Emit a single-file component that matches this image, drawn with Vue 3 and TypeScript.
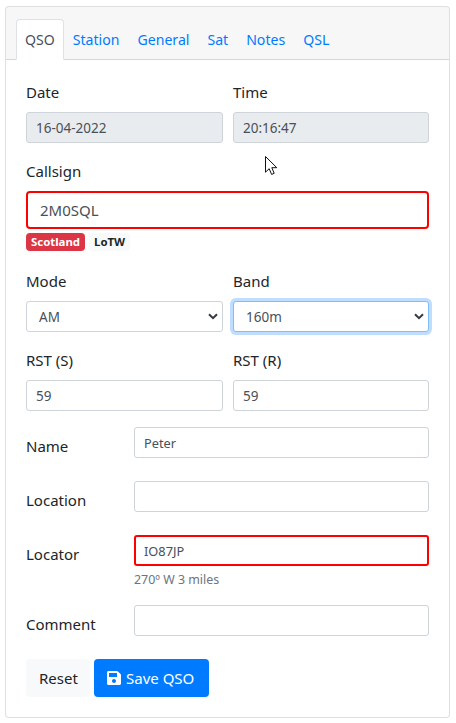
<script setup lang="ts">
const tabs: string[] = ['Station', 'General', 'Sat', 'Notes', 'QSL']
</script>

<template>
  <div class="card">
    <div class="card-header">
      <ul class="tabs">
        <li class="tab active">QSO</li>
        <li v-for="t in tabs" :key="t" class="tab">{{ t }}</li>
      </ul>
    </div>
    <div class="card-body">
      <div class="two">
        <div class="group">
          <label>Date</label>
          <input class="ctl" disabled value="16-04-2022" />
        </div>
        <div class="group">
          <label>Time</label>
          <input class="ctl" disabled value="20:16:47" />
        </div>
      </div>

      <div class="callsign">
        <label>Callsign</label>
        <input class="ctl large" value="2M0SQL" />
        <div class="badges">
          <span class="badge danger">Scotland</span>
          <span class="badge light">LoTW</span>
        </div>
      </div>

      <div class="two">
        <div class="group">
          <label>Mode</label>
          <div class="select-wrap">
            <select class="ctl sel"><option>AM</option></select>
            <svg class="chev" viewBox="0 0 10 7" width="10" height="7"><path d="M1 1.2L5 5.2L9 1.2" fill="none" stroke="#343a40" stroke-width="2" /></svg>
          </div>
        </div>
        <div class="group">
          <label>Band</label>
          <div class="select-wrap">
            <select class="ctl sel focus"><option>160m</option></select>
            <svg class="chev" viewBox="0 0 10 7" width="10" height="7"><path d="M1 1.2L5 5.2L9 1.2" fill="none" stroke="#343a40" stroke-width="2" /></svg>
          </div>
        </div>
      </div>

      <div class="two">
        <div class="group">
          <label>RST (S)</label>
          <input class="ctl" value="59" />
        </div>
        <div class="group">
          <label>RST (R)</label>
          <input class="ctl" value="59" />
        </div>
      </div>

      <div class="row">
        <label class="side">Name</label>
        <input class="ctl narrow" value="Peter" />
      </div>
      <div class="row">
        <label class="side">Location</label>
        <input class="ctl" value="" />
      </div>
      <div class="row">
        <label class="side">Locator</label>
        <div>
          <input class="ctl narrow red" value="IO87JP" />
          <small class="hint">270º W 3 miles</small>
        </div>
      </div>
      <div class="row">
        <label class="side">Comment</label>
        <input class="ctl" value="" />
      </div>

      <div class="buttons">
        <button class="btn light-btn" type="button">Reset</button>
        <button class="btn primary" type="button">
          <svg class="save" viewBox="0 0 448 512" width="14" height="16"><path fill="currentColor" d="M433.941 129.941l-83.882-83.882A48 48 0 0 0 316.118 32H48C21.49 32 0 53.49 0 80v352c0 26.51 21.49 48 48 48h352c26.51 0 48-21.49 48-48V163.882a48 48 0 0 0-14.059-33.941zM224 416c-35.346 0-64-28.654-64-64 0-35.346 28.654-64 64-64s64 28.654 64 64c0 35.346-28.654 64-64 64zm96-304.52V212c0 6.627-5.373 12-12 12H76c-6.627 0-12-5.373-12-12V108c0-6.627 5.373-12 12-12h228.52c3.183 0 6.235 1.264 8.485 3.515l3.48 3.48A11.996 11.996 0 0 1 320 111.48z" /></svg>
          Save QSO
        </button>
      </div>
    </div>

    <svg class="cursor" viewBox="0 0 12 19" width="12" height="19"><path d="M0.5 0.5V16.2L4.2 12.7L6.6 18.4L9.2 17.3L6.8 11.7H11.8Z" fill="#fff" stroke="#111" stroke-width="1" stroke-linejoin="round" /></svg>
  </div>
</template>

<style>
html, body { margin: 0; background: #fff; }
</style>

<style scoped>
.card, .card * { box-sizing: border-box; }
.card {
  position: relative;
  width: 445px;
  margin: 6px 0 0 5px;
  border: 1px solid rgba(0, 0, 0, .125);
  border-radius: 4px;
  background: #fff;
  font-family: "Noto Sans", "Open Sans", sans-serif;
  font-size: 15px;
  line-height: 24px;
  color: #212529;
}
.card-header {
  height: 53px;
  padding: 12px 10px 0;
  background: rgba(0, 0, 0, .03);
  border-bottom: 1px solid rgba(0, 0, 0, .125);
  border-radius: 3px 3px 0 0;
}
.tabs { display: flex; list-style: none; margin: 0; padding: 0; }
.tab {
  height: 41px;
  padding: 8px;
  border: 1px solid transparent;
  border-radius: 4px 4px 0 0;
  color: #007bff;
  font-size: 14.1px;
}
.tab.active {
  color: #495057;
  background: #fff;
  border-color: #dee2e6 #dee2e6 #fff;
}
.card-body { padding: 20px; }
.two { display: grid; grid-template-columns: 197px 196px; gap: 10px; margin-bottom: 16px; }
label { display: block; margin-bottom: 8px; }
.ctl {
  display: block;
  width: 100%;
  height: 31px;
  padding: 4px 8px 4px 9px;
  border: 1px solid #ced4da;
  border-radius: 3px;
  background: #fff;
  color: #495057;
  font: 13.5px/20px "Noto Sans", "Open Sans", sans-serif;
  outline: none;
}
.ctl:disabled { background: #e9ecef; opacity: 1; }
.narrow { font-size: 12.8px; }
.large {
  height: 38px;
  padding: 6px 12px;
  border: 2px solid #f00;
  border-radius: 4px;
  font-size: 15px;
}
.red { border: 2px solid #f00; padding-left: 8px; }
.callsign { margin-bottom: 18px; }
.badges { display: flex; gap: 4px; margin-top: 4px; height: 18px; }
.badge {
  height: 18px;
  padding: 0 5px;
  border-radius: 4px;
  font-size: 11.4px;
  font-weight: 700;
  line-height: 18px;
}
.danger { background: #dc3545; color: #fff; }
.light { background: #f8f9fa; color: #212529; }
.select-wrap { position: relative; }
.sel { appearance: none; padding-left: 12px; }
.focus { border-color: #80bdff; box-shadow: 0 0 0 3px rgba(0, 123, 255, .25); }
.chev { position: absolute; right: 5px; top: 12px; pointer-events: none; }
.row { display: grid; grid-template-columns: 98px 295px; gap: 10px; margin-bottom: 16px; min-height: 38px; }
.side { margin: 0; padding: 7px 0; }
.hint { display: block; margin-top: 5px; font-size: 12.4px; line-height: 18px; color: #6c757d; }
.buttons { display: flex; gap: 4px; }
.btn {
  height: 38px;
  padding: 6px 12px;
  border: 1px solid transparent;
  border-radius: 4px;
  font: 15px/24px "Noto Sans", "Open Sans", sans-serif;
  white-space: nowrap;
}
.light-btn { background: #f8f9fa; color: #212529; width: 64px; }
.primary { background: #007bff; color: #fff; width: 115px; display: flex; align-items: center; gap: 5px; }
.save { flex: none; }
.cursor { position: absolute; left: 259px; top: 149px; }
</style>
